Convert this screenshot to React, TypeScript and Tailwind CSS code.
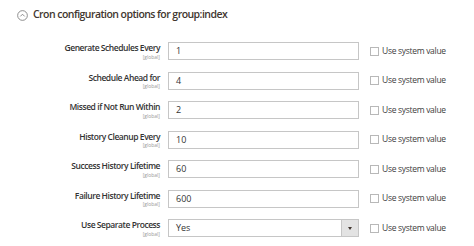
const rows = [
  { label: "Generate Schedules Every", value: "1" },
  { label: "Schedule Ahead for", value: "4" },
  { label: "Missed if Not Run Within", value: "2" },
  { label: "History Cleanup Every", value: "10" },
  { label: "Success History Lifetime", value: "60" },
  { label: "Failure History Lifetime", value: "600" },
];

function SystemValue() {
  return (
    <label className="flex items-center gap-[3px] ml-[11px] text-[8.5px] tracking-[-0.3px] text-[#404040]">
      <span className="w-[9px] h-[9px] border border-[#b8b8b8] bg-white" />
      Use system value
    </label>
  );
}

function Label({ text }: { text: string }) {
  return (
    <div className="w-[168px] pr-[8px] flex flex-col items-end leading-none">
      <span className="text-[8.5px] font-semibold tracking-[-0.45px] text-[#333] mt-[2px]">{text}</span>
      <span className="text-[5px] text-[#999] mt-[2px]">[global]</span>
    </div>
  );
}

export default function App() {
  return (
    <div
      className="w-[474px] h-[246px] bg-white overflow-hidden"
      style={{ fontFamily: '"Open Sans", sans-serif' }}
    >
      <div className="flex items-center h-[30px] pl-[17px]">
        <svg width="11" height="11" viewBox="0 0 12 12" className="mr-[5px]">
          <circle cx="6" cy="6" r="5.3" fill="none" stroke="#777" strokeWidth="0.9" />
          <path d="M3.6 7 L6 4.6 L8.4 7" fill="none" stroke="#777" strokeWidth="0.9" />
        </svg>
        <span className="text-[10.5px] font-semibold text-[#41362f] tracking-[-0.55px]">
          Cron configuration options for group:index
        </span>
      </div>
      <div className="flex flex-col gap-[11.5px] mt-[12px]">
        {rows.map((r) => (
          <div key={r.label} className="flex items-start h-[18px]">
            <Label text={r.label} />
            <div className="w-[191px] h-[18px] border border-[#c6c6c6] flex items-center pl-[7px] text-[9px] text-[#333]">
              {r.value}
            </div>
            <div className="h-[18px] flex items-center">
              <SystemValue />
            </div>
          </div>
        ))}
        <div className="flex items-start h-[18px]">
          <Label text="Use Separate Process" />
          <div className="w-[191px] h-[18px] border border-[#c6c6c6] flex items-center text-[9px] text-[#333]">
            <span className="flex-1 pl-[7px]">Yes</span>
            <span className="w-[17px] h-full bg-[#e3e3e3] border-l border-[#c6c6c6] flex items-center justify-center">
              <span className="w-0 h-0 border-l-[2.5px] border-r-[2.5px] border-t-[3px] border-l-transparent border-r-transparent border-t-[#41362f]" />
            </span>
          </div>
          <div className="h-[18px] flex items-center">
            <SystemValue />
          </div>
        </div>
      </div>
    </div>
  );
}
